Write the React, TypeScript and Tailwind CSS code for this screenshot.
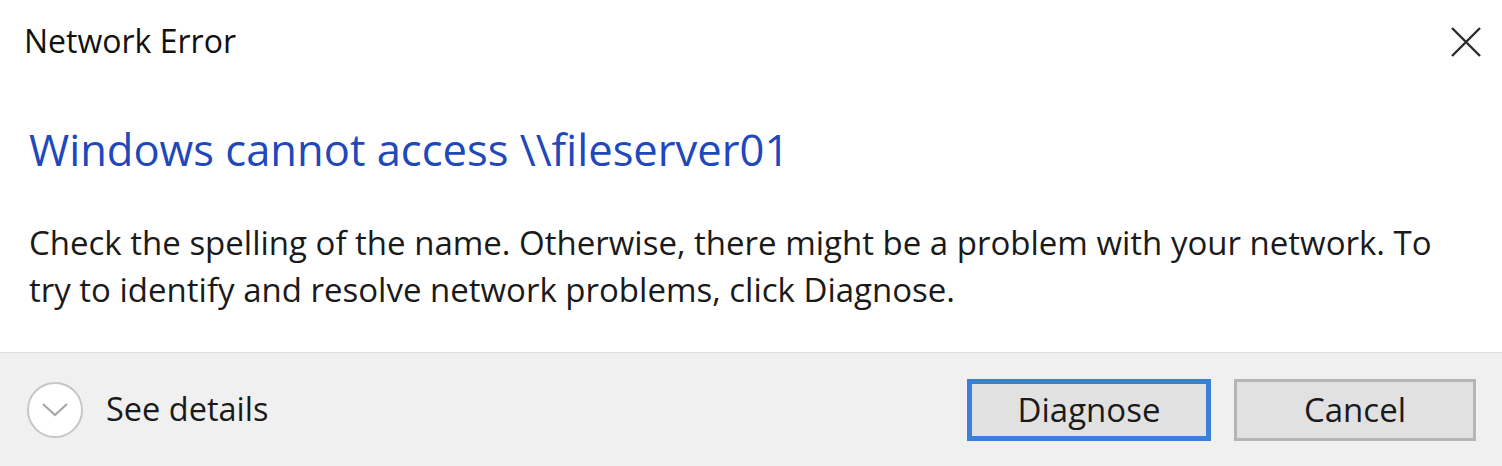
export default function App() {
  return (
    <div
      className="w-[1502px] h-[466px] bg-white flex flex-col overflow-hidden"
      style={{ fontFamily: '"Open Sans", "Noto Sans", sans-serif' }}
    >
      <div className="flex-1 flex flex-col">
        <div className="flex items-start justify-between pl-[24px] pr-[20px] pt-[21px]">
          <span className="text-[32px] leading-[40px] text-[#111]">Network Error</span>
          <svg width="32" height="32" viewBox="0 0 32 32" className="mt-[5px]">
            <path d="M2 2 L30 30 M30 2 L2 30" stroke="#2a2a2a" strokeWidth="2.4" />
          </svg>
        </div>
        <h1 className="pl-[29px] mt-[64px] text-[43.5px] leading-[50px] text-[#2148bb]">
          Windows cannot access \\fileserver01
        </h1>
        <p className="pl-[29px] mt-[44px] text-[33px] leading-[47px] text-[#1a1a1a]">
          Check the spelling of the name. Otherwise, there might be a problem with your network. To
          <br />
          try to identify and resolve network problems, click Diagnose.
        </p>
      </div>
      <div className="h-[114px] shrink-0 bg-[#f0f0f0] border-t border-[#dcdcdc] flex items-center px-[26px]">
        <div className="ml-[1px] w-[56px] h-[56px] rounded-full border-2 border-[#c6c6c6] bg-white flex items-center justify-center">
          <svg width="28" height="16" viewBox="0 0 28 16">
            <path d="M2 2 L14 13 L26 2" fill="none" stroke="#a8a8a8" strokeWidth="2.2" />
          </svg>
        </div>
        <span className="ml-[23px] text-[32.5px] text-[#1a1a1a]">See details</span>
        <div className="ml-auto flex gap-[23px]">
          <button className="w-[244px] h-[62px] bg-[#e1e1e1] border-[5px] border-[#3a7fd8] text-[33px] text-[#1a1a1a]">
            Diagnose
          </button>
          <button className="w-[242px] h-[62px] bg-[#e1e1e1] border-[3px] border-[#b5b5b5] text-[33px] text-[#1a1a1a]">
            Cancel
          </button>
        </div>
      </div>
    </div>
  );
}
